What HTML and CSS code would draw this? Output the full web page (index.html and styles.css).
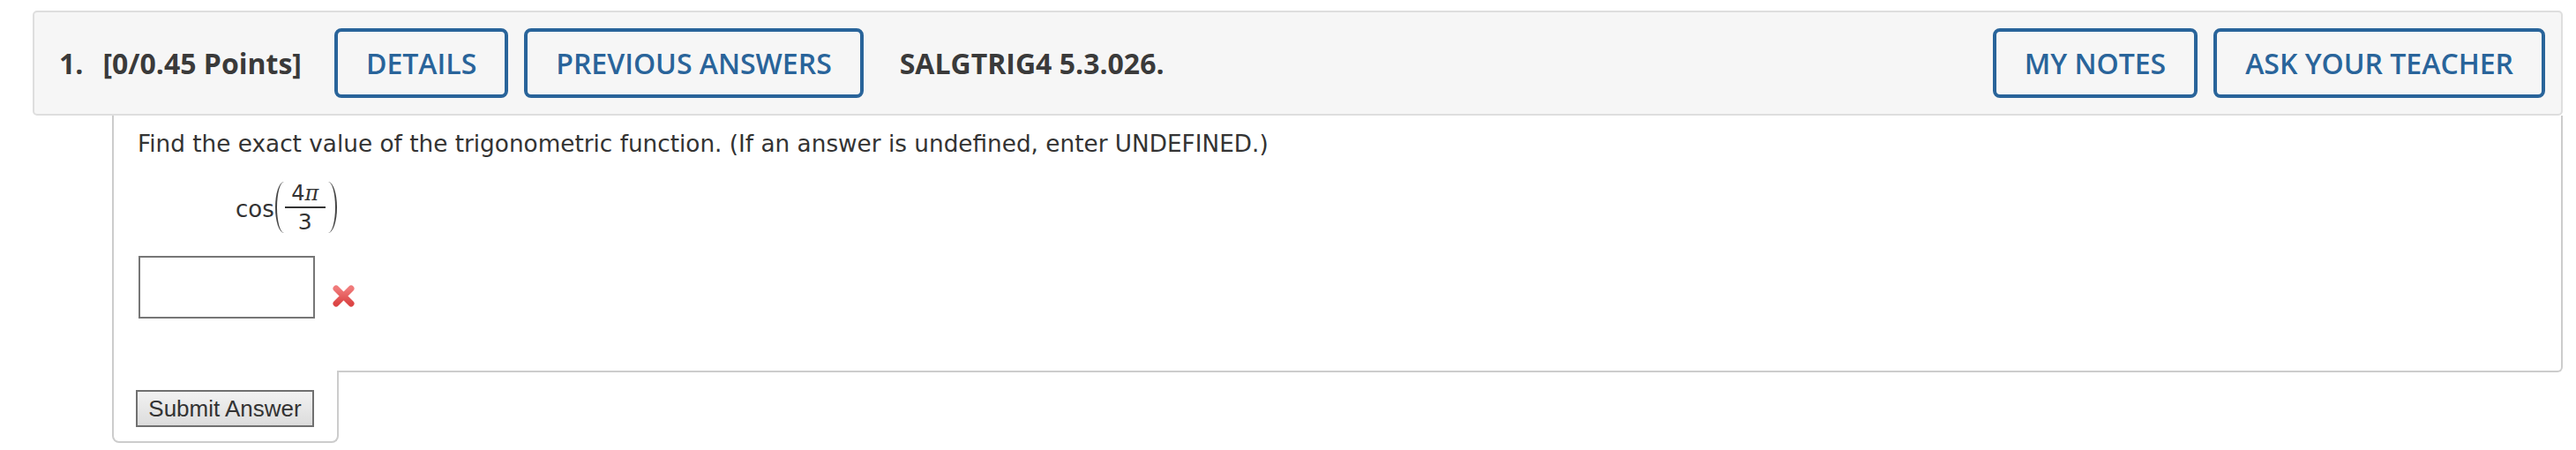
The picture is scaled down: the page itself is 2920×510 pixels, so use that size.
FILE: index.html
```html
<!DOCTYPE html>
<html lang="en">
<head>
<meta charset="utf-8">
<title>Question 1</title>
<link rel="stylesheet" href="styles.css">
</head>
<body>
<div class="page">
  <div class="qhead">
    <span class="qnum">1.</span>
    <span class="qpoints">[0/0.45 Points]</span>
    <button class="hbtn first">DETAILS</button>
    <button class="hbtn">PREVIOUS ANSWERS</button>
    <span class="qref">SALGTRIG4 5.3.026.</span>
    <span class="spacer"></span>
    <button class="hbtn">MY NOTES</button>
    <button class="hbtn">ASK YOUR TEACHER</button>
  </div>
  <div class="qbody">
    <p class="qtext">Find the exact value of the trigonometric function. (If an answer is undefined, enter UNDEFINED.)</p>
    <div class="math">
      <span class="fn">cos</span>
      <span class="paren left"></span>
      <span class="frac">
        <span class="num">4<i class="pi">π</i></span>
        <span class="den">3</span>
      </span>
      <span class="paren right"></span>
    </div>
    <div class="answer">
      <input class="ans-input" type="text" aria-label="answer">
      <svg class="xmark" width="27" height="27" viewBox="0 0 27 27" aria-hidden="true">
        <defs>
          <linearGradient id="xg" x1="0" y1="0" x2="0" y2="1">
            <stop offset="0" stop-color="#f07a7a"/>
            <stop offset="1" stop-color="#dc4545"/>
          </linearGradient>
        </defs>
        <path d="M5 5 L22 22 M22 5 L5 22" stroke="url(#xg)" stroke-width="7" stroke-linecap="round" fill="none"/>
      </svg>
    </div>
  </div>
  <div class="qtab">
    <button class="submit">Submit Answer</button>
  </div>
</div>
</body>
</html>
```
FILE: styles.css
```css
* { box-sizing: border-box; }
html, body { margin: 0; padding: 0; background: #ffffff; }
.page { padding: 12px 15px 0 37px; }

.qhead {
  height: 119px;
  display: flex;
  align-items: center;
  padding: 0 18px 0 28px;
  background: #f6f6f6;
  border: 2px solid #dedede;
  border-radius: 5px;
  font-family: "Open Sans", "Liberation Sans", sans-serif;
  color: #3a3a3a;
}
.qnum { font-size: 32px; font-weight: 700; margin-right: 22px; }
.qpoints { font-size: 32px; font-weight: 700; margin-right: 37px; }
.hbtn {
  height: 79px;
  padding: 0 32px;
  margin-right: 18px;
  border: 4px solid #29649a;
  border-radius: 8px;
  background: #f6f6f6;
  color: #29649a;
  font-family: "Open Sans", "Liberation Sans", sans-serif;
  font-size: 32px;
  font-weight: 600;
  white-space: nowrap;
}
.hbtn:last-child { margin-right: 0; }
.qref { font-size: 32px; font-weight: 700; margin-left: 23px; }
.spacer { flex: 1; }

.qbody {
  margin-left: 90px;
  height: 291px;
  border: 2px solid #cccccc;
  border-top: none;
  border-bottom-right-radius: 6px;
  padding: 14px 0 0 27px;
  color: #333333;
  font-family: "DejaVu Sans", Verdana, sans-serif;
}
.qtext { margin: 0; font-size: 26.3px; line-height: 36px; }

.math {
  display: flex;
  align-items: center;
  margin: 24px 0 0 111px;
  height: 60px;
}
.fn { font-size: 26px; margin-top: 4px; }
.paren {
  display: block;
  width: 10px;
  height: 58px;
  border: 0 solid #444;
}
.paren.left {
  border-left-width: 2px;
  border-radius: 10px 0 0 10px / 29px 0 0 29px;
  margin-left: 1px;
}
.paren.right {
  border-right-width: 2px;
  border-radius: 0 10px 10px 0 / 0 29px 29px 0;
}
.frac {
  display: flex;
  flex-direction: column;
  align-items: center;
  margin: 0 3px 0 1px;
  font-size: 24px;
  line-height: 1;
}
.num { padding: 0 0 3px; border-bottom: 2px solid #333; width: 46px; text-align: center; }
.pi { font-family: "DejaVu Serif", "Liberation Serif", serif; font-style: italic; }
.den { padding-top: 3px; font-size: 25px; }

.answer {
  display: flex;
  align-items: center;
  margin-top: 25px;
  margin-left: 1px;
}
.ans-input {
  width: 200px;
  height: 71px;
  border: 2px solid #767676;
  background: #fff;
  margin: 0;
}
.xmark { margin-left: 19px; margin-top: 20px; display: block; }

.qtab {
  margin-left: 90px;
  margin-top: -2px;
  width: 257px;
  height: 82px;
  background: #ffffff;
  border: 2px solid #cccccc;
  border-top: none;
  border-radius: 0 0 8px 8px;
  padding: 22px 0 0 25px;
}
.submit {
  display: block;
  width: 202px;
  height: 42px;
  margin: 0;
  padding: 0;
  border: 2px solid #707070;
  background: linear-gradient(#f2f2f2, #dcdcdc);
  color: #333;
  font-family: "Liberation Sans", Arial, sans-serif;
  font-size: 26px;
}
```
